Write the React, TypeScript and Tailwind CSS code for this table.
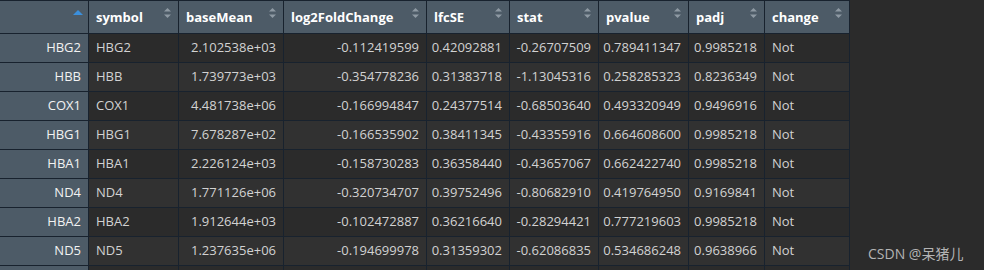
import React from "react"

type Col = { key: string; label: string; w: string; align: "left" | "right" }

const COLS: Col[] = [
    { key: "symbol", label: "symbol", w: "w-[90px]", align: "left" },
    { key: "baseMean", label: "baseMean", w: "w-[105px]", align: "right" },
    { key: "log2", label: "log2FoldChange", w: "w-[143px]", align: "right" },
    { key: "lfcSE", label: "lfcSE", w: "w-[83px]", align: "right" },
    { key: "stat", label: "stat", w: "w-[89px]", align: "right" },
    { key: "pvalue", label: "pvalue", w: "w-[90px]", align: "right" },
    { key: "padj", label: "padj", w: "w-[76px]", align: "right" },
    { key: "change", label: "change", w: "w-[85px]", align: "left" },
]

const ROWS: string[][] = [
    ["HBG2", "HBG2", "2.102538e+03", "-0.112419599", "0.42092881", "-0.26707509", "0.789411347", "0.9985218", "Not"],
    ["HBB", "HBB", "1.739773e+03", "-0.354778236", "0.31383718", "-1.13045316", "0.258285323", "0.8236349", "Not"],
    ["COX1", "COX1", "4.481738e+06", "-0.166994847", "0.24377514", "-0.68503640", "0.493320949", "0.9496916", "Not"],
    ["HBG1", "HBG1", "7.678287e+02", "-0.166535902", "0.38411345", "-0.43355916", "0.664608600", "0.9985218", "Not"],
    ["HBA1", "HBA1", "2.226124e+03", "-0.158730283", "0.36358440", "-0.43657067", "0.662422740", "0.9985218", "Not"],
    ["ND4", "ND4", "1.771126e+06", "-0.320734707", "0.39752496", "-0.80682910", "0.419764950", "0.9169841", "Not"],
    ["HBA2", "HBA2", "1.912644e+03", "-0.102472887", "0.36216640", "-0.28294421", "0.777219603", "0.9985218", "Not"],
    ["ND5", "ND5", "1.237635e+06", "-0.194699978", "0.31359302", "-0.62086835", "0.534686248", "0.9638966", "Not"],
]

function SortIcon() {
    return (
        <svg width="7" height="10" viewBox="0 0 7 10" className="absolute right-[7px] top-[7px]">
            <path d="M3.5 0 L7 3.6 L0 3.6 Z" fill="#8e99a3" />
            <path d="M3.5 10 L7 6.4 L0 6.4 Z" fill="#8e99a3" />
        </svg>
    )
}

export default function App() {
    return (
        <div
            className="relative w-[984px] h-[270px] overflow-hidden bg-[#2b2b2b] text-[13px]"
            style={{ fontFamily: "'Open Sans', 'Noto Sans', 'Noto Sans CJK SC', sans-serif" }}
        >
            <div className="w-[850px] border-t border-[#18222e]">
                {/* header */}
                <div className="flex h-[33px] bg-[#4d5b67] border-b border-[#18222e]">
                    <div className="relative w-[89px] shrink-0 border-r border-[#18222e]">
                        <svg width="10" height="5" viewBox="0 0 10 5" className="absolute left-[73px] top-[9px]">
                            <path d="M5 0 L10 5 L0 5 Z" fill="#3b8fdc" />
                        </svg>
                    </div>
                    {COLS.map((c) => (
                        <div
                            key={c.key}
                            className={`relative ${c.w} shrink-0 border-r border-[#18222e] flex items-center pl-[7px] pt-[1px] font-bold text-white`}
                        >
                            {c.label}
                            <SortIcon />
                        </div>
                    ))}
                </div>

                {/* body */}
                {ROWS.map((r, i) => (
                    <div
                        key={r[0]}
                        className={`flex h-[29px] border-b border-[#18222e] ${i % 2 === 0 ? "bg-[#2b2b2b]" : "bg-[#313131]"}`}
                    >
                        <div className="w-[89px] shrink-0 bg-[#4d5b67] border-r border-[#18222e] flex items-center justify-end pr-[7px] text-[#f2f2f2]">
                            {r[0]}
                        </div>
                        {COLS.map((c, j) => (
                            <div
                                key={c.key}
                                className={`${c.w} shrink-0 border-r border-[#18222e] flex items-center px-[7px] text-[#d2d2d2] ${c.align === "right" ? "justify-end" : "justify-start"}`}
                            >
                                {r[j + 1]}
                            </div>
                        ))}
                    </div>
                ))}
                <div className="flex h-[29px] bg-[#2b2b2b]">
                    <div className="w-[89px] shrink-0 bg-[#4d5b67] border-r border-[#18222e]" />
                    {COLS.map((c) => (
                        <div key={c.key} className={`${c.w} shrink-0 border-r border-[#18222e]`} />
                    ))}
                </div>
            </div>

            {/* watermark */}
            <div className="absolute left-[868px] top-[243px] text-[14px] text-[#b4b4b4]">CSDN @呆猪儿</div>
        </div>
    )
}
